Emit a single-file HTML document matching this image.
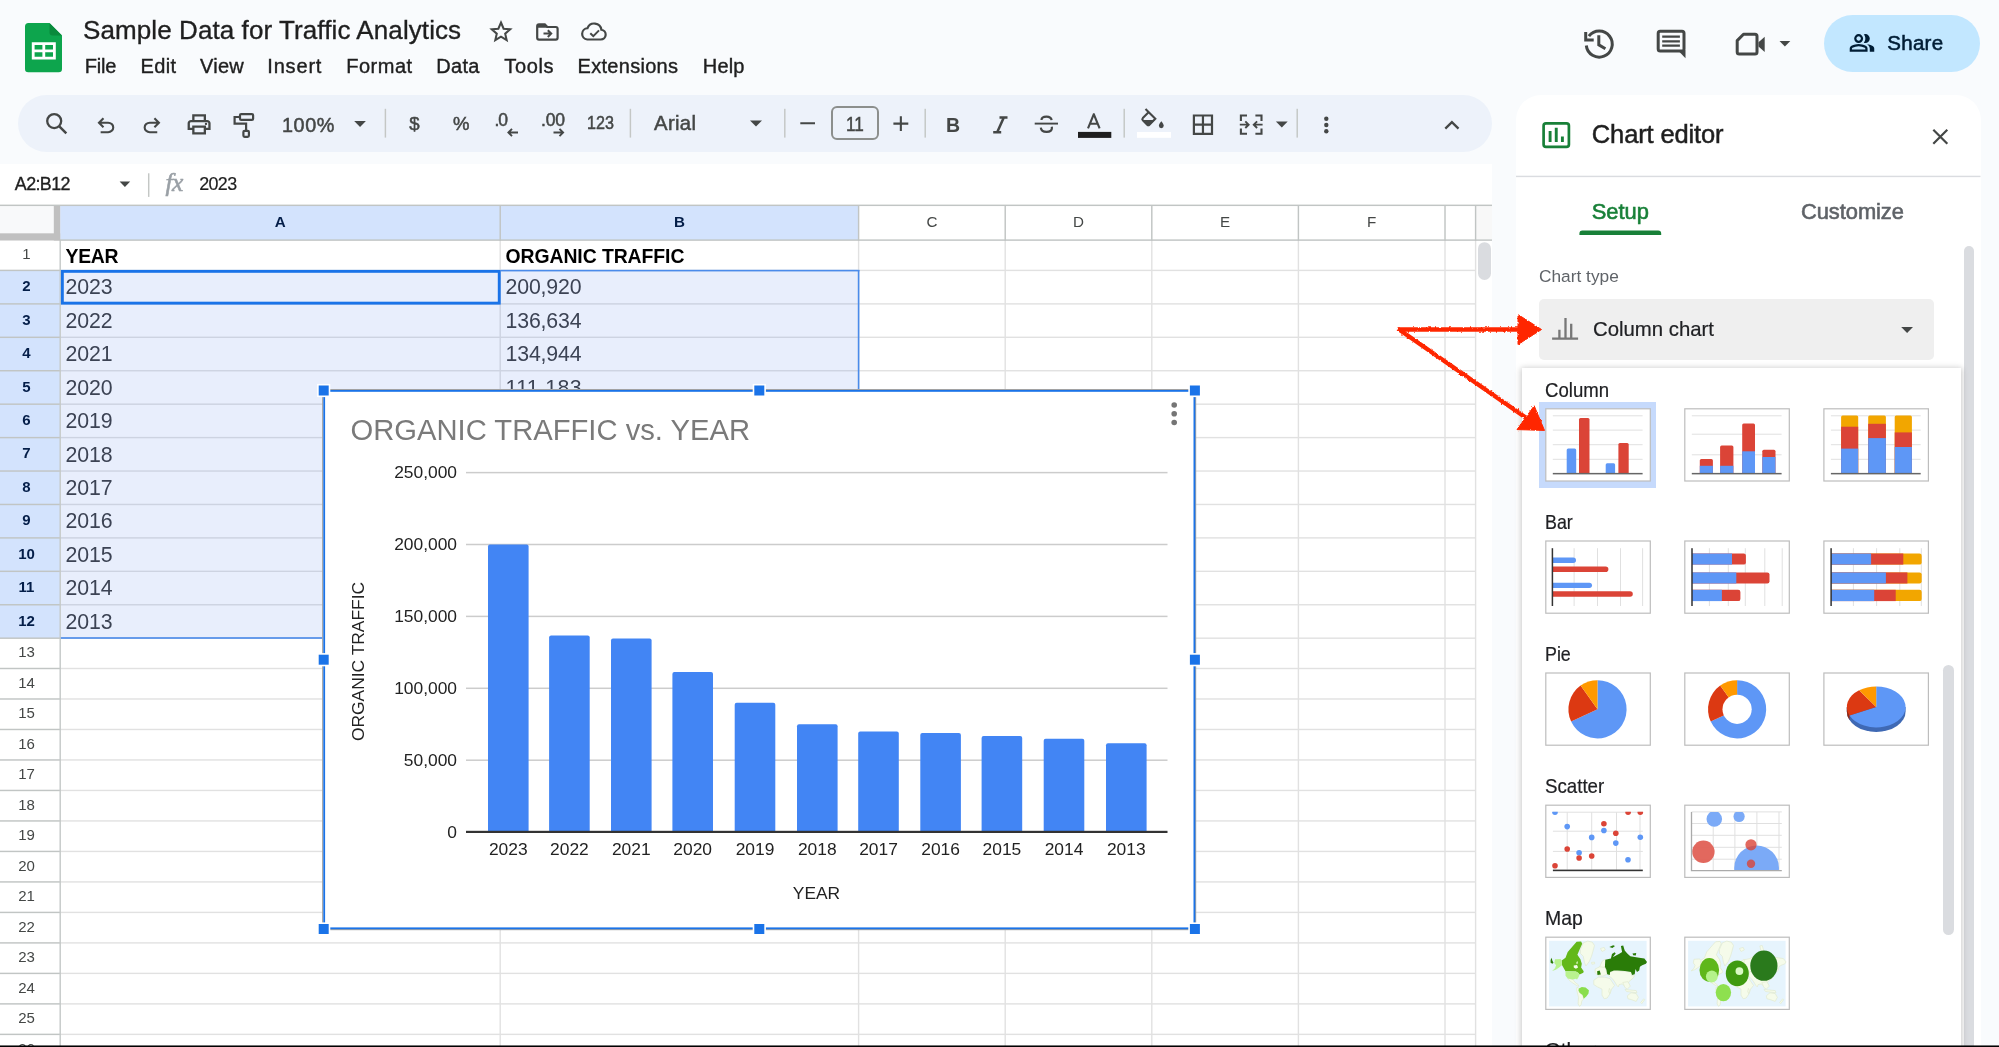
<!DOCTYPE html>
<html><head><meta charset="utf-8"><title>Sample Data for Traffic Analytics</title>
<style>
*{box-sizing:border-box;margin:0;padding:0}
html,body{width:1999px;height:1047px;overflow:hidden;background:#f9fbfd;font-family:"Liberation Sans",sans-serif;color:#1f1f1f}
body{position:relative}
.abs{position:absolute}
.t{position:absolute;white-space:nowrap;line-height:1}
/* top */
#toolbar{left:18px;top:95px;width:1474px;height:57px;border-radius:29px;background:#edf2fa}
#fbar{left:0;top:164px;width:1492px;height:41px;background:#fff}
/* grid */
#grid{position:absolute;left:0;top:0;width:1492px;height:1047px;overflow:hidden}
#grid>*{position:absolute}
.rh{left:-3.5px;width:60px;height:20px;line-height:20px;text-align:center;font-size:15px;color:#444746}
.rh.sel{color:#041e49;font-weight:bold}
.ch{top:211.8px;width:60px;height:20px;line-height:20px;text-align:center;font-size:15.2px;color:#444746}
.ch.sel{color:#041e49;font-weight:bold}
</style></head><body><div id="root" style="position:absolute;left:0;top:0;width:1999px;height:1047px;will-change:transform">
<svg class="abs" style="left:0;top:0" width="1999" height="160" viewBox="0 0 1999 160">
<path d="M28.500 23H49.500L62 35.500V69a3.300 3.300 0 0 1-3.300 3.300H28.300A3.300 3.300 0 0 1 25 69V26.500A3.500 3.500 0 0 1 28.500 23z" fill="#0da54d"/>
<path d="M49.500 23L62 35.500H52.500a3 3 0 0 1-3-3z" fill="#098a3c"/>
<path d="M31.800 42.300h24v17.200h-24zM34.600 45v4.500h7.800V45zM45.200 45v4.500h7.800V45zM34.600 52.300v4.500h7.800v-4.500zM45.200 52.300v4.500h7.800v-4.500z" fill="#fff" fill-rule="evenodd"/>
</svg>
<div class="t" style="left:83px;top:16.99px;font-size:26px;letter-spacing:0.09px;color:#1f1f1f;-webkit-text-stroke:0.35px #1f1f1f;">Sample Data for Traffic Analytics</div>
<div class="t" style="left:84.8px;top:55.77px;font-size:20px;letter-spacing:-0.18px;color:#1f1f1f;-webkit-text-stroke:0.4px #1f1f1f;">File</div>
<div class="t" style="left:140.5px;top:55.77px;font-size:20px;letter-spacing:0.38px;color:#1f1f1f;-webkit-text-stroke:0.4px #1f1f1f;">Edit</div>
<div class="t" style="left:200.1px;top:55.77px;font-size:20px;letter-spacing:0.20px;color:#1f1f1f;-webkit-text-stroke:0.4px #1f1f1f;">View</div>
<div class="t" style="left:267.3px;top:55.77px;font-size:20px;letter-spacing:0.82px;color:#1f1f1f;-webkit-text-stroke:0.4px #1f1f1f;">Insert</div>
<div class="t" style="left:346.2px;top:55.77px;font-size:20px;letter-spacing:0.53px;color:#1f1f1f;-webkit-text-stroke:0.4px #1f1f1f;">Format</div>
<div class="t" style="left:436.2px;top:55.77px;font-size:20px;letter-spacing:0.32px;color:#1f1f1f;-webkit-text-stroke:0.4px #1f1f1f;">Data</div>
<div class="t" style="left:504.3px;top:55.77px;font-size:20px;letter-spacing:0.63px;color:#1f1f1f;-webkit-text-stroke:0.4px #1f1f1f;">Tools</div>
<div class="t" style="left:577.5px;top:55.77px;font-size:20px;letter-spacing:0.30px;color:#1f1f1f;-webkit-text-stroke:0.4px #1f1f1f;">Extensions</div>
<div class="t" style="left:702.8px;top:55.77px;font-size:20px;letter-spacing:0.16px;color:#1f1f1f;-webkit-text-stroke:0.4px #1f1f1f;">Help</div>
<div id="toolbar" class="abs"></div>
<div id="fbar" class="abs"></div>
<div class="t" style="left:282.1px;top:115.84px;font-size:19.8px;letter-spacing:0.52px;color:#444746;-webkit-text-stroke:0.5px #444746;">100%</div>
<div class="t" style="left:409.3px;top:114.76px;font-size:18.6px;letter-spacing:0.00px;color:#444746;-webkit-text-stroke:0.5px #444746;">$</div>
<div class="t" style="left:453px;top:114.74px;font-size:18.5px;letter-spacing:0.00px;color:#444746;-webkit-text-stroke:0.5px #444746;">%</div>
<div class="t" style="left:494.4px;top:111.79px;font-size:17.5px;letter-spacing:-1.00px;color:#444746;-webkit-text-stroke:0.5px #444746;">.0</div>
<div class="t" style="left:541px;top:111.79px;font-size:17.5px;letter-spacing:-0.16px;color:#444746;-webkit-text-stroke:0.5px #444746;">.00</div>
<div class="t" style="left:587.3px;top:114.7px;font-size:17.6px;color:#444746;transform-origin:0 0;transform:scaleX(0.9160);-webkit-text-stroke:0.5px #444746;">123</div>
<div class="t" style="left:654px;top:112.82px;font-size:20.3px;letter-spacing:0.35px;color:#444746;-webkit-text-stroke:0.5px #444746;">Arial</div>
<div class="abs" style="left:830.700px;top:106.200px;width:48.800px;height:34.200px;border:2px solid #8c8f8d;border-radius:6px"></div>
<div class="t" style="left:845.8px;top:114.66px;font-size:19.3px;color:#444746;transform-origin:0 0;transform:scaleX(0.8884);-webkit-text-stroke:0.5px #444746;">11</div>
<div class="t" style="left:946.2px;top:114.22px;font-size:21px;color:#444746;transform-origin:0 0;transform:scaleX(0.9297);font-weight:bold;">B</div>
<div class="t" style="left:14.8px;top:176.35px;font-size:17.9px;letter-spacing:-0.60px;color:#1f1f1f;-webkit-text-stroke:0.35px #1f1f1f;">A2:B12</div>
<div class="t" style="left:199.2px;top:176.35px;font-size:17.9px;letter-spacing:-0.61px;color:#1f1f1f;-webkit-text-stroke:0.2px #1f1f1f;">2023</div>
<div class="t" style="left:165.500px;top:170px;font-family:'Liberation Serif',serif;font-style:italic;font-size:25.500px;color:#9aa0a6;letter-spacing:-0.500px;-webkit-text-stroke:0.600px #9aa0a6">fx</div>
<svg class="abs" style="left:0;top:0" width="1999" height="210" viewBox="0 0 1999 210"><rect x="384.68" y="108.800" width="1.450" height="28.800" fill="#c4c7c5"/><rect x="629.68" y="108.800" width="1.450" height="28.800" fill="#c4c7c5"/><rect x="784.08" y="108.800" width="1.450" height="28.800" fill="#c4c7c5"/><rect x="924.48" y="108.800" width="1.450" height="28.800" fill="#c4c7c5"/><rect x="1123.48" y="108.800" width="1.450" height="28.800" fill="#c4c7c5"/><rect x="1296.48" y="108.800" width="1.450" height="28.800" fill="#c4c7c5"/><rect x="147.980" y="173.300" width="1.450" height="23.600" fill="#c4c7c5"/></svg>
<div class="abs" style="left:1824.200px;top:14.500px;width:156px;height:57.800px;border-radius:29px;background:#c2e7ff"></div>
<div class="t" style="left:1887.3px;top:32.55px;font-size:20.5px;letter-spacing:0.27px;color:#001d35;-webkit-text-stroke:0.55px #001d35;">Share</div>
<svg class="abs" style="left:0;top:0" width="1999" height="210" viewBox="0 0 1999 210" fill="none" stroke="#444746" stroke-width="2.200">
<!-- star -->
<g transform="translate(500.800 31.200) scale(0.905) translate(-500.600 -32.800)"><path d="M500.800 23.200l2.900 6.800 7.300.650-5.550 4.850 1.650 7.200-6.300-3.800-6.300 3.800 1.650-7.200-5.550-4.850 7.300-.650z" stroke-width="2.250" stroke-linejoin="miter"/></g>
<!-- folder move -->
<path d="M537.200 26.200a1.800 1.800 0 0 1 1.800-1.800h5.800l2.600 2.600h8.400a1.800 1.800 0 0 1 1.800 1.800v9a1.800 1.800 0 0 1-1.800 1.800h-16.800a1.800 1.800 0 0 1-1.800-1.800z" stroke-width="2.200"/>
<path d="M537.200 24.400h8l2.400 3.400h-10.400z" fill="#444746" stroke="none"/>
<path d="M543.500 33.600h7M547.800 30.200l3.400 3.400-3.400 3.400" stroke-width="2"/>
<!-- cloud done -->
<path d="M587.200 39.500h13.600a4.900 4.900 0 0 0 .6-9.760 7.200 7.200 0 0 0-13.900-1.500 5.650 5.650 0 0 0-.3 11.260z" stroke-width="2.200"/>
<path d="M590.300 33.200l3 3 5.700-5.800" stroke-width="2"/>
<!-- search -->
<circle cx="54.200" cy="121.100" r="7" stroke-width="2.300"/>
<path d="M59.300 126.300l7 7" stroke-width="2.500"/>
<!-- paint roller -->
<rect x="240" y="114.100" width="13.100" height="5.800" rx="1.200"/>
<path d="M240 117h-5.400v6.700h11.500v6.500"/>
<rect x="243.400" y="130.800" width="5.500" height="6" rx="1.200"/>
<!-- decimal arrows -->
<path d="M518 132.500h-9.500M512 128.900l-3.600 3.600 3.600 3.600" stroke-width="1.900"/>
<path d="M553.500 132.500h9.500M559.500 128.900l3.600 3.600-3.600 3.600" stroke-width="1.900"/>
<!-- minus / plus -->
<path d="M800.300 123.300h14.700M893.400 123.600h14.900M900.850 116.200v14.800" stroke-width="2.100"/>
<!-- italic -->
<path d="M999.500 117.500h8M993.200 132.200h8M1003.800 117.500l-6.600 14.700" stroke-width="2.500"/>
<!-- strikethrough -->
<path d="M1034.700 123.600h23.300" stroke-width="1.900"/>
<path d="M1051.600 120.200c-.3-2.300-2.300-3.600-5.100-3.600-2.900 0-5 1.400-5 3.500M1040.800 127.600c.3 2.700 2.600 4.300 5.800 4.300 3.100 0 5.300-1.500 5.300-3.900 0-.5-.1-.9-.2-1.300" stroke-width="2.200"/>
<!-- text color -->
<rect x="1078" y="131.900" width="33.300" height="6" fill="#1f1f1f" stroke="none"/>
<path d="M1088 128.300l5.750-14h.1l5.750 14M1089.900 123.700h7.800" stroke-width="2.100"/>
<!-- fill color -->
<rect x="1137" y="132" width="34" height="5.800" fill="#fff" stroke="none"/>
<path d="M1145.500 109l9.800 9.800-5.900 5.900a1.600 1.600 0 0 1-2.200 0l-4.400-4.400a1.600 1.600 0 0 1 0-2.200l6-6" stroke-width="2.100"/>
<path d="M1143.200 120h11.500l-6.300 6.300z" fill="#444746" stroke="none"/>
<path d="M1161.300 121.300s-2.400 2.700-2.400 4.500a2.400 2.400 0 0 0 4.800 0c0-1.800-2.400-4.500-2.400-4.500z" fill="#444746" stroke="none"/>
<!-- borders -->
<path d="M1193.900 115.500h18.100v18.300h-18.100zM1202.950 115.500v18.300M1193.900 124.650h18.100" stroke-width="2.200"/>
<!-- merge -->
<path d="M1247 115.500h-6.100v5.400M1255.400 115.500h6.100v5.400M1247 133.800h-6.100v-5.400M1255.400 133.800h6.100v-5.400" stroke-width="2.100"/>
<path d="M1239.800 124.650h8.500M1245.300 121.300l3.350 3.350-3.350 3.350M1262.600 124.650h-8.500M1257.100 121.300l-3.350 3.350 3.350 3.350" stroke-width="1.900"/>
<!-- chevron up -->
<path d="M1445.300 128.600l6.600-6.500 6.600 6.500" stroke-width="2.300"/>
<!-- history -->
<path d="M1586.300 45.500a13 13 0 1 0 2.600-9.300" stroke-width="3"/>
<path d="M1585.700 32v8h8" stroke-width="3"/>
<path d="M1598.800 35.200v9.600l6.600 4" stroke-width="3"/>
<!-- comment -->
<path d="M1658.200 33.300a2 2 0 0 1 2-2h21.800a2 2 0 0 1 2 2v15.800a2 2 0 0 1-2 2h-21.800a2 2 0 0 1-2-2z" stroke-width="3"/>
<path d="M1679.500 52l6 6.200v-8z" fill="#444746" stroke="none"/>
<path d="M1662.200 36.700h17.700M1662.200 41.400h17.700M1662.200 45.700h17.700" stroke-width="2.300"/>
<!-- video -->
<path d="M1737.200 40.600l6.300-6.300h11.500a2 2 0 0 1 2 2v15.600a2 2 0 0 1-2 2h-15.800a2 2 0 0 1-2-2z" stroke-width="3" stroke-linejoin="round"/>
<path d="M1758.500 42.200l6.200-5.500v15.300l-6.200-5.500z" fill="#444746" stroke="none"/>
</svg>
<svg class="abs" style="left:0;top:0" width="1999" height="210" viewBox="0 0 1999 210" fill="#444746">
<!-- carets -->
<path d="M354.200 121.100h11.700l-5.850 5.900z"/>
<path d="M750 120.600h12l-6 6z"/>
<path d="M1275.900 121.600h11.800l-5.900 6z"/>
<path d="M1779.500 41h10.800l-5.400 5.400z"/>
<path d="M119.600 181.400h10.600l-5.300 5.600z"/>
<!-- 3 dots -->
<circle cx="1326.300" cy="118.800" r="2.200"/><circle cx="1326.300" cy="125" r="2.200"/><circle cx="1326.300" cy="131.200" r="2.200"/>
<!-- undo / redo (material symbols) -->
<g transform="translate(93.300 113.300) scale(1.050)"><path d="M7 19v-2h7.100q1.575 0 2.738-1T18 13.500 16.838 11 14.100 10H7.800l2.600 2.600L9 14 4 9l5-5 1.400 1.400L7.800 8H14.100q2.425 0 4.163 1.575T20 13.500t-1.737 3.925T14.100 19z"/></g>
<g transform="translate(139.400 113.300) scale(1.050)"><path d="M9.900 19q-2.425 0-4.163-1.575T4 13.500t1.737-3.925T9.900 8h6.300l-2.600-2.600L15 4l5 5-5 5-1.400-1.400 2.600-2.600H9.900q-1.575 0-2.738 1T6 13.500 7.162 16 9.900 17H17v2z"/></g>
<!-- print -->
<g transform="translate(185.300 111) scale(1.150 1.120)"><path d="M16 8V5H8v3H6V3h12v5zM18 12.500q.425 0 .713-.288T19 11.500t-.287-.712T18 10.500t-.712.288T17 11.500t.288.713.712.287M16 19v-4H8v4zm2 2H6v-4H2v-6q0-1.275.875-2.137T5 8h14q1.275 0 2.138.863T22 11v6h-4zm2-6v-4q0-.425-.288-.712T19 10H5q-.425 0-.712.288T4 11v4h2v-2h12v2z"/></g>
<!-- people -->
<g transform="translate(1848.600 29.700) scale(1.115 1.106)" fill="#001d35"><path d="M1 20v-2.800q0-.85.438-1.562T2.600 14.550q1.550-.775 3.150-1.163T9 13t3.250.387 3.150 1.163q.725.375 1.163 1.088T17 17.200V20zm18 0v-3q0-1.100-.612-2.113T16.650 13.150q1.275.15 2.400.513t2.100.887q.9.500 1.375 1.113T23 17v3zM9 12q-1.650 0-2.825-1.175T5 8t1.175-2.825T9 4t2.825 1.175T13 8t-1.175 2.825T9 12m10-4q0 1.650-1.175 2.825T15 12q-.275 0-.7-.062t-.7-.138q.675-.8 1.038-1.775T15 8t-.362-2.025T13.600 4.200q.350-.125.700-.163T15 4q1.650 0 2.825 1.175T19 8M3 18h12v-.8q0-.275-.137-.5t-.363-.35q-1.350-.675-2.725-1.012T9 15t-2.775.338T3.500 16.350q-.225.125-.363.35T3 17.200zm6-8q.825 0 1.413-.587T11 8t-.587-1.413T9 6t-1.413.588T7 8t.588 1.413T9 10"/></g>
</svg>
<div id="grid">
<svg style="left:0;top:0" width="1492" height="1047" viewBox="0 0 1492 1047">
<rect x="0" y="205" width="1492" height="842" fill="#fff"/>
<rect x="0" y="206" width="54" height="27.500" fill="#f8f9fa"/>
<rect x="60.200" y="206" width="798.4" height="34" fill="#d3e3fd"/>
<rect x="0" y="270" width="60.200" height="368" fill="#d3e3fd"/>
<rect x="60.200" y="269.70" width="1415.4" height="1.400" fill="#e1e1e1"/>
<rect x="60.200" y="303.18" width="1415.4" height="1.400" fill="#e1e1e1"/>
<rect x="60.200" y="336.61" width="1415.4" height="1.400" fill="#e1e1e1"/>
<rect x="60.200" y="370.04" width="1415.4" height="1.400" fill="#e1e1e1"/>
<rect x="60.200" y="403.47" width="1415.4" height="1.400" fill="#e1e1e1"/>
<rect x="60.200" y="436.90" width="1415.4" height="1.400" fill="#e1e1e1"/>
<rect x="60.200" y="470.33" width="1415.4" height="1.400" fill="#e1e1e1"/>
<rect x="60.200" y="503.76" width="1415.4" height="1.400" fill="#e1e1e1"/>
<rect x="60.200" y="537.19" width="1415.4" height="1.400" fill="#e1e1e1"/>
<rect x="60.200" y="570.62" width="1415.4" height="1.400" fill="#e1e1e1"/>
<rect x="60.200" y="604.05" width="1415.4" height="1.400" fill="#e1e1e1"/>
<rect x="60.200" y="637.48" width="1415.4" height="1.400" fill="#e1e1e1"/>
<rect x="60.200" y="667.79" width="1415.4" height="1.400" fill="#e1e1e1"/>
<rect x="60.200" y="698.28" width="1415.4" height="1.400" fill="#e1e1e1"/>
<rect x="60.200" y="728.77" width="1415.4" height="1.400" fill="#e1e1e1"/>
<rect x="60.200" y="759.26" width="1415.4" height="1.400" fill="#e1e1e1"/>
<rect x="60.200" y="789.75" width="1415.4" height="1.400" fill="#e1e1e1"/>
<rect x="60.200" y="820.24" width="1415.4" height="1.400" fill="#e1e1e1"/>
<rect x="60.200" y="850.73" width="1415.4" height="1.400" fill="#e1e1e1"/>
<rect x="60.200" y="881.22" width="1415.4" height="1.400" fill="#e1e1e1"/>
<rect x="60.200" y="911.71" width="1415.4" height="1.400" fill="#e1e1e1"/>
<rect x="60.200" y="942.20" width="1415.4" height="1.400" fill="#e1e1e1"/>
<rect x="60.200" y="972.69" width="1415.4" height="1.400" fill="#e1e1e1"/>
<rect x="60.200" y="1003.18" width="1415.4" height="1.400" fill="#e1e1e1"/>
<rect x="60.200" y="1033.67" width="1415.4" height="1.400" fill="#e1e1e1"/>
<rect x="60.200" y="1064.16" width="1415.4" height="1.400" fill="#e1e1e1"/>
<rect x="499.50" y="240" width="1.400" height="810" fill="#e1e1e1"/>
<rect x="857.90" y="240" width="1.400" height="810" fill="#e1e1e1"/>
<rect x="1004.50" y="240" width="1.400" height="810" fill="#e1e1e1"/>
<rect x="1151.10" y="240" width="1.400" height="810" fill="#e1e1e1"/>
<rect x="1297.70" y="240" width="1.400" height="810" fill="#e1e1e1"/>
<rect x="1444.30" y="240" width="1.400" height="810" fill="#e1e1e1"/>
<rect x="1474.90" y="240" width="1.400" height="810" fill="#e1e1e1"/>
<rect x="60.900" y="270.400" width="797.7" height="367.800" fill="rgb(25,85,225)" fill-opacity="0.1"/>
<rect x="1476.200" y="206" width="15.800" height="33.500" fill="#f8f8f8"/>
<rect x="1478" y="242.200" width="13" height="37.800" rx="6.500" fill="#dadce0"/>
<rect x="0" y="204.600" width="1492.400" height="1.450" fill="#c1c5c4"/>
<rect x="60" y="239.38" width="1432.400" height="1.450" fill="#c1c5c4"/>
<rect x="499.48" y="205" width="1.450" height="35.700" fill="#c1c5c4"/>
<rect x="857.88" y="205" width="1.450" height="35.700" fill="#c1c5c4"/>
<rect x="1004.48" y="205" width="1.450" height="35.700" fill="#c1c5c4"/>
<rect x="1151.08" y="205" width="1.450" height="35.700" fill="#c1c5c4"/>
<rect x="1297.68" y="205" width="1.450" height="35.700" fill="#c1c5c4"/>
<rect x="1444.28" y="205" width="1.450" height="35.700" fill="#c1c5c4"/>
<rect x="1474.88" y="205" width="1.450" height="35.700" fill="#c1c5c4"/>
<rect x="0" y="269.68" width="60.800" height="1.450" fill="#c1c5c4"/>
<rect x="0" y="303.16" width="60.800" height="1.450" fill="#c1c5c4"/>
<rect x="0" y="336.59" width="60.800" height="1.450" fill="#c1c5c4"/>
<rect x="0" y="370.02" width="60.800" height="1.450" fill="#c1c5c4"/>
<rect x="0" y="403.45" width="60.800" height="1.450" fill="#c1c5c4"/>
<rect x="0" y="436.88" width="60.800" height="1.450" fill="#c1c5c4"/>
<rect x="0" y="470.31" width="60.800" height="1.450" fill="#c1c5c4"/>
<rect x="0" y="503.74" width="60.800" height="1.450" fill="#c1c5c4"/>
<rect x="0" y="537.17" width="60.800" height="1.450" fill="#c1c5c4"/>
<rect x="0" y="570.60" width="60.800" height="1.450" fill="#c1c5c4"/>
<rect x="0" y="604.03" width="60.800" height="1.450" fill="#c1c5c4"/>
<rect x="0" y="637.46" width="60.800" height="1.450" fill="#c1c5c4"/>
<rect x="0" y="667.77" width="60.800" height="1.450" fill="#c1c5c4"/>
<rect x="0" y="698.26" width="60.800" height="1.450" fill="#c1c5c4"/>
<rect x="0" y="728.75" width="60.800" height="1.450" fill="#c1c5c4"/>
<rect x="0" y="759.24" width="60.800" height="1.450" fill="#c1c5c4"/>
<rect x="0" y="789.73" width="60.800" height="1.450" fill="#c1c5c4"/>
<rect x="0" y="820.22" width="60.800" height="1.450" fill="#c1c5c4"/>
<rect x="0" y="850.71" width="60.800" height="1.450" fill="#c1c5c4"/>
<rect x="0" y="881.20" width="60.800" height="1.450" fill="#c1c5c4"/>
<rect x="0" y="911.69" width="60.800" height="1.450" fill="#c1c5c4"/>
<rect x="0" y="942.18" width="60.800" height="1.450" fill="#c1c5c4"/>
<rect x="0" y="972.67" width="60.800" height="1.450" fill="#c1c5c4"/>
<rect x="0" y="1003.16" width="60.800" height="1.450" fill="#c1c5c4"/>
<rect x="0" y="1033.65" width="60.800" height="1.450" fill="#c1c5c4"/>
<rect x="0" y="1064.14" width="60.800" height="1.450" fill="#c1c5c4"/>
<rect x="59.48" y="240" width="1.450" height="810" fill="#c6cac9"/>
<rect x="53.800" y="206" width="6.400" height="34.500" fill="#c0c0c0"/>
<rect x="0" y="233.300" width="60.200" height="7.200" fill="#c0c0c0"/>
<rect x="857.80" y="270" width="1.600" height="368.800" fill="#4a8bea"/>
<rect x="60.800" y="637.20" width="798.6" height="1.600" fill="#4a8bea"/>
<rect x="500.800" y="269.800" width="358.6" height="1.600" fill="#4a8bea"/>
<rect x="62.350" y="271.350" width="436.900" height="31.800" fill="none" stroke="#1a73e8" stroke-width="2.900"/>
</svg>
<div class="rh" style="top:244.35px">1</div>
<div class="rh sel" style="top:276.24px">2</div>
<div class="rh sel" style="top:309.70px">3</div>
<div class="rh sel" style="top:343.12px">4</div>
<div class="rh sel" style="top:376.56px">5</div>
<div class="rh sel" style="top:409.99px">6</div>
<div class="rh sel" style="top:443.42px">7</div>
<div class="rh sel" style="top:476.85px">8</div>
<div class="rh sel" style="top:510.27px">9</div>
<div class="rh sel" style="top:543.71px">10</div>
<div class="rh sel" style="top:577.13px">11</div>
<div class="rh sel" style="top:610.57px">12</div>
<div class="rh" style="top:642.44px">13</div>
<div class="rh" style="top:672.84px">14</div>
<div class="rh" style="top:703.33px">15</div>
<div class="rh" style="top:733.82px">16</div>
<div class="rh" style="top:764.31px">17</div>
<div class="rh" style="top:794.80px">18</div>
<div class="rh" style="top:825.28px">19</div>
<div class="rh" style="top:855.77px">20</div>
<div class="rh" style="top:886.26px">21</div>
<div class="rh" style="top:916.75px">22</div>
<div class="rh" style="top:947.25px">23</div>
<div class="rh" style="top:977.74px">24</div>
<div class="rh" style="top:1008.23px">25</div>
<div class="rh" style="top:1038.71px">26</div>
<div class="ch sel" style="left:250.20px">A</div>
<div class="ch sel" style="left:649.40px">B</div>
<div class="ch" style="left:901.90px">C</div>
<div class="ch" style="left:1048.50px">D</div>
<div class="ch" style="left:1195.10px">E</div>
<div class="ch" style="left:1341.70px">F</div>
<div class="t" style="left:65.6px;top:277.37px;font-size:21.3px;letter-spacing:-0.13px;color:#3c4354;">2023</div>
<div class="t" style="left:505.6px;top:277.37px;font-size:21.3px;letter-spacing:-0.18px;color:#3c4354;">200,920</div>
<div class="t" style="left:65.6px;top:310.81px;font-size:21.3px;letter-spacing:-0.13px;color:#3c4354;">2022</div>
<div class="t" style="left:505.6px;top:310.81px;font-size:21.3px;letter-spacing:-0.18px;color:#3c4354;">136,634</div>
<div class="t" style="left:65.6px;top:344.25px;font-size:21.3px;letter-spacing:-0.13px;color:#3c4354;">2021</div>
<div class="t" style="left:505.6px;top:344.25px;font-size:21.3px;letter-spacing:-0.18px;color:#3c4354;">134,944</div>
<div class="t" style="left:65.6px;top:377.69px;font-size:21.3px;letter-spacing:-0.13px;color:#3c4354;">2020</div>
<div class="t" style="left:505.6px;top:377.69px;font-size:21.3px;letter-spacing:0.35px;color:#3c4354;">111,183</div>
<div class="t" style="left:65.6px;top:411.13px;font-size:21.3px;letter-spacing:-0.13px;color:#3c4354;">2019</div>
<div class="t" style="left:65.6px;top:444.57px;font-size:21.3px;letter-spacing:-0.13px;color:#3c4354;">2018</div>
<div class="t" style="left:65.6px;top:478.01px;font-size:21.3px;letter-spacing:-0.13px;color:#3c4354;">2017</div>
<div class="t" style="left:65.6px;top:511.45px;font-size:21.3px;letter-spacing:-0.13px;color:#3c4354;">2016</div>
<div class="t" style="left:65.6px;top:544.89px;font-size:21.3px;letter-spacing:-0.13px;color:#3c4354;">2015</div>
<div class="t" style="left:65.6px;top:578.33px;font-size:21.3px;letter-spacing:-0.13px;color:#3c4354;">2014</div>
<div class="t" style="left:65.6px;top:611.77px;font-size:21.3px;letter-spacing:-0.13px;color:#3c4354;">2013</div>
<div class="t" style="left:65.5px;top:246.78px;font-size:19.4px;letter-spacing:-0.30px;color:#000;font-weight:bold;">YEAR</div>
<div class="t" style="left:505.5px;top:246.78px;font-size:19.4px;letter-spacing:-0.07px;color:#000;font-weight:bold;">ORGANIC TRAFFIC</div>
</div>
<svg class="abs" style="left:0;top:0" width="1999" height="1047" viewBox="0 0 1999 1047" font-family="Liberation Sans, sans-serif">
<rect x="322.700" y="389.600" width="872.900" height="540" fill="#fff" stroke="#a3a3a3" stroke-width="1.200"/><rect x="324.200" y="390.900" width="870.200" height="537.400" fill="#fff" stroke="#1a73e8" stroke-width="1.800"/>
<text x="350.500" y="440" font-size="29.200" fill="#7a7a7a">ORGANIC TRAFFIC vs. YEAR</text>
<rect x="466" y="471.85" width="1702" height="1.500" fill="#ccc" transform="scale(1)" style="width:701.500px"/>
<text x="457" y="478.2" font-size="17.400" fill="#222" text-anchor="end">250,000</text>
<rect x="466" y="543.75" width="1702" height="1.500" fill="#ccc" transform="scale(1)" style="width:701.500px"/>
<text x="457" y="550.1" font-size="17.400" fill="#222" text-anchor="end">200,000</text>
<rect x="466" y="615.65" width="1702" height="1.500" fill="#ccc" transform="scale(1)" style="width:701.500px"/>
<text x="457" y="622.0" font-size="17.400" fill="#222" text-anchor="end">150,000</text>
<rect x="466" y="687.55" width="1702" height="1.500" fill="#ccc" transform="scale(1)" style="width:701.500px"/>
<text x="457" y="693.9" font-size="17.400" fill="#222" text-anchor="end">100,000</text>
<rect x="466" y="759.45" width="1702" height="1.500" fill="#ccc" transform="scale(1)" style="width:701.500px"/>
<text x="457" y="765.8" font-size="17.400" fill="#222" text-anchor="end">50,000</text>
<text x="457" y="837.6" font-size="17.400" fill="#222" text-anchor="end">0</text>
<path d="M488.0 832V546.4q0-2 2-2h36.600q2 0 2 2V832z" fill="#4285f4"/>
<text x="508.3" y="855" font-size="17.400" fill="#222" text-anchor="middle">2023</text>
<path d="M549.1 832V637.6q0-2 2-2h36.600q2 0 2 2V832z" fill="#4285f4"/>
<text x="569.4" y="855" font-size="17.400" fill="#222" text-anchor="middle">2022</text>
<path d="M611.0 832V640.5q0-2 2-2h36.600q2 0 2 2V832z" fill="#4285f4"/>
<text x="631.3" y="855" font-size="17.400" fill="#222" text-anchor="middle">2021</text>
<path d="M672.4 832V674.0q0-2 2-2h36.600q2 0 2 2V832z" fill="#4285f4"/>
<text x="692.7" y="855" font-size="17.400" fill="#222" text-anchor="middle">2020</text>
<path d="M734.7 832V704.8q0-2 2-2h36.600q2 0 2 2V832z" fill="#4285f4"/>
<text x="755.0" y="855" font-size="17.400" fill="#222" text-anchor="middle">2019</text>
<path d="M797.0 832V726.2q0-2 2-2h36.600q2 0 2 2V832z" fill="#4285f4"/>
<text x="817.3" y="855" font-size="17.400" fill="#222" text-anchor="middle">2018</text>
<path d="M858.2 832V733.6q0-2 2-2h36.600q2 0 2 2V832z" fill="#4285f4"/>
<text x="878.5" y="855" font-size="17.400" fill="#222" text-anchor="middle">2017</text>
<path d="M920.3 832V734.9q0-2 2-2h36.600q2 0 2 2V832z" fill="#4285f4"/>
<text x="940.6" y="855" font-size="17.400" fill="#222" text-anchor="middle">2016</text>
<path d="M981.6 832V738.1q0-2 2-2h36.600q2 0 2 2V832z" fill="#4285f4"/>
<text x="1001.9" y="855" font-size="17.400" fill="#222" text-anchor="middle">2015</text>
<path d="M1043.7 832V740.8q0-2 2-2h36.600q2 0 2 2V832z" fill="#4285f4"/>
<text x="1064.0" y="855" font-size="17.400" fill="#222" text-anchor="middle">2014</text>
<path d="M1106.0 832V745.3q0-2 2-2h36.600q2 0 2 2V832z" fill="#4285f4"/>
<text x="1126.3" y="855" font-size="17.400" fill="#222" text-anchor="middle">2013</text>
<rect x="466" y="830.800" width="701.500" height="2.200" fill="#333"/>
<text x="816.500" y="898.500" font-size="17.400" fill="#222" text-anchor="middle">YEAR</text>
<text transform="translate(363.500 661.500) rotate(-90)" font-size="17.400" fill="#222" text-anchor="middle">ORGANIC TRAFFIC</text>
<circle cx="1174.200" cy="405" r="2.800" fill="#757575"/>
<circle cx="1174.200" cy="413.8" r="2.800" fill="#757575"/>
<circle cx="1174.200" cy="422.5" r="2.800" fill="#757575"/>
<rect x="317.1" y="383.9" width="13.200" height="13.200" fill="#fff"/><rect x="318.7" y="385.5" width="10" height="10" fill="#1a73e8"/>
<rect x="752.7" y="383.9" width="13.200" height="13.200" fill="#fff"/><rect x="754.3" y="385.5" width="10" height="10" fill="#1a73e8"/>
<rect x="1188.3" y="383.9" width="13.200" height="13.200" fill="#fff"/><rect x="1189.9" y="385.5" width="10" height="10" fill="#1a73e8"/>
<rect x="317.1" y="653.1" width="13.200" height="13.200" fill="#fff"/><rect x="318.7" y="654.7" width="10" height="10" fill="#1a73e8"/>
<rect x="1188.3" y="653.1" width="13.200" height="13.200" fill="#fff"/><rect x="1189.9" y="654.7" width="10" height="10" fill="#1a73e8"/>
<rect x="317.1" y="922.4" width="13.200" height="13.200" fill="#fff"/><rect x="318.7" y="924.0" width="10" height="10" fill="#1a73e8"/>
<rect x="752.7" y="922.4" width="13.200" height="13.200" fill="#fff"/><rect x="754.3" y="924.0" width="10" height="10" fill="#1a73e8"/>
<rect x="1188.3" y="922.4" width="13.200" height="13.200" fill="#fff"/><rect x="1189.9" y="924.0" width="10" height="10" fill="#1a73e8"/>
</svg>
<div id="panel" class="abs" style="left:1516px;top:94.500px;width:464.500px;height:960px;background:#fff;border-radius:25px 25px 0 0"></div>
<svg class="abs" style="left:0;top:0" width="1999" height="300" viewBox="0 0 1999 300"><rect x="1516" y="175.700" width="464.500" height="1.450" fill="#dadce0"/><path d="M1579.400 234.900v-1.500a3 3 0 0 1 3-3h75.800a3 3 0 0 1 3 3v1.500z" fill="#188038"/></svg>
<div class="t" style="left:1591.8px;top:122.41px;font-size:25.5px;letter-spacing:-0.13px;color:#1f1f1f;-webkit-text-stroke:0.5px #1f1f1f;">Chart editor</div>
<div class="t" style="left:1591.8px;top:200.76px;font-size:21.9px;letter-spacing:-0.03px;color:#188038;-webkit-text-stroke:0.6px #188038;">Setup</div>
<div class="t" style="left:1801px;top:200.76px;font-size:21.9px;letter-spacing:-0.06px;color:#5f6368;-webkit-text-stroke:0.6px #5f6368;">Customize</div>
<div class="abs" style="left:1963.500px;top:245.500px;width:10.500px;height:820px;background:#dadce0;border-radius:5.250px"></div>
<div class="t" style="left:1538.7px;top:268.27px;font-size:17.4px;color:#5f6368;transform-origin:0 0;transform:scaleX(0.9942);">Chart type</div>
<div class="abs" style="left:1539px;top:299px;width:394.700px;height:60.700px;background:#efefef;border-radius:5px"></div>
<div class="t" style="left:1592.9px;top:319.32px;font-size:20.3px;color:#202124;transform-origin:0 0;transform:scaleX(1.0031);-webkit-text-stroke:0.2px #202124;">Column chart</div>
<div class="abs" style="left:1521.500px;top:367.500px;width:439px;height:700px;background:#fff;box-shadow:0 1px 6px 1px rgba(0,0,0,0.22)"></div>
<div class="abs" style="left:1942.500px;top:665px;width:11px;height:270px;background:#dadce0;border-radius:5.500px"></div>
<div class="t" style="left:1545.2px;top:380.02px;font-size:20.3px;color:#202124;transform-origin:0 0;transform:scaleX(0.9164);-webkit-text-stroke:0.2px #202124;">Column</div>
<div class="t" style="left:1545.2px;top:512.22px;font-size:20.3px;color:#202124;transform-origin:0 0;transform:scaleX(0.8800);-webkit-text-stroke:0.2px #202124;">Bar</div>
<div class="t" style="left:1545.2px;top:644.22px;font-size:20.3px;color:#202124;transform-origin:0 0;transform:scaleX(0.8793);-webkit-text-stroke:0.2px #202124;">Pie</div>
<div class="t" style="left:1545.2px;top:776.42px;font-size:20.3px;color:#202124;transform-origin:0 0;transform:scaleX(0.9221);-webkit-text-stroke:0.2px #202124;">Scatter</div>
<div class="t" style="left:1545.2px;top:907.72px;font-size:20.3px;color:#202124;transform-origin:0 0;transform:scaleX(0.9572);-webkit-text-stroke:0.2px #202124;">Map</div>
<div class="t" style="left:1545.2px;top:1039.82px;font-size:20.3px;color:#202124;transform-origin:0 0;transform:scaleX(1.0006);-webkit-text-stroke:0.2px #202124;">Other</div>
<div class="abs" style="left:1538.800px;top:402.200px;width:117.300px;height:85.500px;background:#c6dafc"></div>
<svg class="abs" style="left:0;top:0" width="1999" height="1047" viewBox="0 0 1999 1047">
<g transform="translate(1545.2 408.2)"><rect x="0.600" y="0.600" width="104.500" height="72.200" fill="#fff" stroke="#bdbdbd" stroke-width="1.200"/><rect x="7.6" y="7.1" width="89.80000000000001" height="1" fill="#e0e0e0"/><rect x="7.6" y="21.4" width="89.80000000000001" height="1" fill="#e0e0e0"/><rect x="7.6" y="36.0" width="89.80000000000001" height="1" fill="#e0e0e0"/><rect x="7.6" y="50.6" width="89.80000000000001" height="1" fill="#e0e0e0"/><path d="M21.5 65.4V41.9q0-1.5 1.5-1.5H29.5q1.5 0 1.5 1.5V65.4z" fill="#5e97f6"/><path d="M33.8 65.4V11.3q0-1.5 1.5-1.5H42.8q1.5 0 1.5 1.5V65.4z" fill="#db4437"/><path d="M60.5 65.4V56.5q0-1.5 1.5-1.5H68.4q1.5 0 1.5 1.5V65.4z" fill="#5e97f6"/><path d="M73.2 65.4V36.2q0-1.5 1.5-1.5H82.0q1.5 0 1.5 1.5V65.4z" fill="#db4437"/><rect x="7.600" y="64.700" width="89.800" height="1.500" fill="#666"/></g>
<g transform="translate(1684.2 408.2)"><rect x="0.600" y="0.600" width="104.500" height="72.200" fill="#fff" stroke="#bdbdbd" stroke-width="1.200"/><rect x="7.6" y="7.1" width="89.80000000000001" height="1" fill="#e0e0e0"/><rect x="7.6" y="25.5" width="89.80000000000001" height="1" fill="#e0e0e0"/><rect x="7.6" y="46.1" width="89.80000000000001" height="1" fill="#e0e0e0"/><path d="M15.6 65.4V52.2q0-1.5 1.5-1.5H27.2q1.5 0 1.5 1.5V65.4z" fill="#db4437"/><rect x="15.6" y="57.6" width="13.1" height="7.8" fill="#5e97f6"/><path d="M35.9 65.4V38.8q0-1.5 1.5-1.5H47.7q1.5 0 1.5 1.5V65.4z" fill="#db4437"/><rect x="35.9" y="57.6" width="13.3" height="7.8" fill="#5e97f6"/><path d="M58 65.4V16.9q0-1.5 1.5-1.5H69.3q1.5 0 1.5 1.5V65.4z" fill="#db4437"/><rect x="58" y="43.1" width="12.8" height="22.3" fill="#5e97f6"/><path d="M78.1 65.4V43.1q0-1.5 1.5-1.5H89.8q1.5 0 1.5 1.5V65.4z" fill="#db4437"/><rect x="78.1" y="48.8" width="13.2" height="16.6" fill="#5e97f6"/><rect x="7.600" y="64.700" width="89.800" height="1.500" fill="#666"/></g>
<g transform="translate(1823.3 408.2)"><rect x="0.600" y="0.600" width="104.500" height="72.200" fill="#fff" stroke="#bdbdbd" stroke-width="1.200"/><rect x="7.6" y="7.1" width="89.80000000000001" height="1" fill="#e0e0e0"/><rect x="7.6" y="21.4" width="89.80000000000001" height="1" fill="#e0e0e0"/><rect x="7.6" y="36.0" width="89.80000000000001" height="1" fill="#e0e0e0"/><rect x="7.6" y="50.6" width="89.80000000000001" height="1" fill="#e0e0e0"/><path d="M17.8 65.4V8.7q0-1.5 1.5-1.5H33.4q1.5 0 1.5 1.5V65.4z" fill="#f2a600"/><rect x="17.8" y="18.5" width="17.1" height="46.9" fill="#db4437"/><rect x="17.8" y="40.4" width="17.1" height="25.0" fill="#5e97f6"/><path d="M44.9 65.4V8.7q0-1.5 1.5-1.5H61.1q1.5 0 1.5 1.5V65.4z" fill="#f2a600"/><rect x="44.9" y="15.6" width="17.7" height="49.8" fill="#db4437"/><rect x="44.9" y="29.9" width="17.7" height="35.5" fill="#5e97f6"/><path d="M71.4 65.4V8.7q0-1.5 1.5-1.5H87.1q1.5 0 1.5 1.5V65.4z" fill="#f2a600"/><rect x="71.4" y="24.2" width="17.2" height="41.2" fill="#db4437"/><rect x="71.4" y="38.8" width="17.2" height="26.6" fill="#5e97f6"/><rect x="7.600" y="64.700" width="89.800" height="1.500" fill="#666"/></g>
<g transform="translate(1545.2 540.4)"><rect x="0.600" y="0.600" width="104.500" height="72.200" fill="#fff" stroke="#bdbdbd" stroke-width="1.200"/><rect x="28.4" y="7.8" width="1" height="57.8" fill="#e0e0e0"/><rect x="51.8" y="7.8" width="1" height="57.8" fill="#e0e0e0"/><rect x="74.8" y="7.8" width="1" height="57.8" fill="#e0e0e0"/><rect x="96.9" y="7.8" width="1" height="57.8" fill="#e0e0e0"/><path d="M7.2 17.2H28.1a2.700000000000001 2.700000000000001 0 0 1 2.700000000000001 2.700000000000001V19.9a2.700000000000001 2.700000000000001 0 0 1 -2.700000000000001 2.700000000000001H7.2z" fill="#5e97f6"/><path d="M7.2 26H60.400000000000006a2.8000000000000007 2.8000000000000007 0 0 1 2.8000000000000007 2.8000000000000007V28.8a2.8000000000000007 2.8000000000000007 0 0 1 -2.8000000000000007 2.8000000000000007H7.2z" fill="#db4437"/><path d="M7.2 42.3H44.14999999999999a2.650000000000002 2.650000000000002 0 0 1 2.650000000000002 2.650000000000002V44.95a2.650000000000002 2.650000000000002 0 0 1 -2.650000000000002 2.650000000000002H7.2z" fill="#5e97f6"/><path d="M7.2 50.9H84.85a2.75 2.75 0 0 1 2.75 2.75V53.65a2.75 2.75 0 0 1 -2.75 2.75H7.2z" fill="#db4437"/><rect x="6.45" y="7.800" width="1.500" height="57.800" fill="#333"/></g>
<g transform="translate(1684.2 540.4)"><rect x="0.600" y="0.600" width="104.500" height="72.200" fill="#fff" stroke="#bdbdbd" stroke-width="1.200"/><rect x="24.7" y="7.8" width="1" height="57.8" fill="#e0e0e0"/><rect x="43.6" y="7.8" width="1" height="57.8" fill="#e0e0e0"/><rect x="60.6" y="7.8" width="1" height="57.8" fill="#e0e0e0"/><rect x="80.1" y="7.8" width="1" height="57.8" fill="#e0e0e0"/><rect x="97.5" y="7.8" width="1" height="57.8" fill="#e0e0e0"/><path d="M7.8 13.1H59.5a2.2 2.2 0 0 1 2.2 2.2V22.0a2.2 2.2 0 0 1 -2.2 2.2H7.8z" fill="#db4437"/><rect x="7.800" y="13.1" width="40.0" height="11.1" fill="#5e97f6"/><path d="M7.8 32H83.1a2.2 2.2 0 0 1 2.2 2.2V40.9a2.2 2.2 0 0 1 -2.2 2.2H7.8z" fill="#db4437"/><rect x="7.800" y="32" width="44.3" height="11.1" fill="#5e97f6"/><path d="M7.8 49.4H54.0a2.2 2.2 0 0 1 2.2 2.2V58.5a2.2 2.2 0 0 1 -2.2 2.2H7.8z" fill="#db4437"/><rect x="7.800" y="49.4" width="29.9" height="11.3" fill="#5e97f6"/><rect x="7.05" y="7.800" width="1.500" height="57.800" fill="#333"/></g>
<g transform="translate(1823.3 540.4)"><rect x="0.600" y="0.600" width="104.500" height="72.200" fill="#fff" stroke="#bdbdbd" stroke-width="1.200"/><rect x="29.6" y="7.8" width="1" height="57.8" fill="#e0e0e0"/><rect x="52.8" y="7.8" width="1" height="57.8" fill="#e0e0e0"/><rect x="76.0" y="7.8" width="1" height="57.8" fill="#e0e0e0"/><rect x="97.5" y="7.8" width="1" height="57.8" fill="#e0e0e0"/><path d="M7.8 13.1H96.2a2.2 2.2 0 0 1 2.2 2.2V22.0a2.2 2.2 0 0 1 -2.2 2.2H7.8z" fill="#f2a600"/><rect x="7.800" y="13.1" width="72.2" height="11.1" fill="#db4437"/><rect x="7.800" y="13.1" width="40.0" height="11.1" fill="#5e97f6"/><path d="M7.8 32H96.2a2.2 2.2 0 0 1 2.2 2.2V40.9a2.2 2.2 0 0 1 -2.2 2.2H7.8z" fill="#f2a600"/><rect x="7.800" y="32" width="76.3" height="11.1" fill="#db4437"/><rect x="7.800" y="32" width="54.8" height="11.1" fill="#5e97f6"/><path d="M7.8 49.4H96.2a2.2 2.2 0 0 1 2.2 2.2V58.5a2.2 2.2 0 0 1 -2.2 2.2H7.8z" fill="#f2a600"/><rect x="7.800" y="49.4" width="64.6" height="11.3" fill="#db4437"/><rect x="7.800" y="49.4" width="43.1" height="11.3" fill="#5e97f6"/><rect x="7.05" y="7.800" width="1.500" height="57.800" fill="#333"/></g>
<g transform="translate(1545.2 672.4)"><rect x="0.600" y="0.600" width="104.500" height="72.200" fill="#fff" stroke="#bdbdbd" stroke-width="1.200"/><path d="M52.3 36.9L52.30 7.80A29.1 29.1 0 1 1 25.93 49.20z" fill="#5e97f6"/><path d="M52.3 36.9L25.93 49.20A29.1 29.1 0 0 1 35.40 13.21z" fill="#dc3912"/><path d="M52.3 36.9L35.40 13.21A29.1 29.1 0 0 1 52.30 7.80z" fill="#ff9900"/></g>
<g transform="translate(1684.2 672.4)"><rect x="0.600" y="0.600" width="104.500" height="72.200" fill="#fff" stroke="#bdbdbd" stroke-width="1.200"/><path d="M52.9 36.9L52.90 7.80A29.1 29.1 0 1 1 26.53 49.20z" fill="#5e97f6"/><path d="M52.9 36.9L26.53 49.20A29.1 29.1 0 0 1 36.00 13.21z" fill="#dc3912"/><path d="M52.9 36.9L36.00 13.21A29.1 29.1 0 0 1 52.90 7.80z" fill="#ff9900"/><circle cx="52.900" cy="36.900" r="14.600" fill="#fff"/></g>
<g transform="translate(1823.3 672.4)"><rect x="0.600" y="0.600" width="104.500" height="72.200" fill="#fff" stroke="#bdbdbd" stroke-width="1.200"/><path d="M23.5 34.5v4.500A29.4 20.5 0 0 0 82.3 39.0v-4.500z" fill="#3f69b4"/><path d="M23.5 34.5v4A29.4 20.5 0 0 0 26.25 47.66V43.16z" fill="#9a280d"/><path d="M52.9 34.5L52.90 14.00A29.4 20.5 0 1 1 26.25 43.16z" fill="#5e97f6"/><path d="M52.9 34.5L26.25 43.16A29.4 20.5 0 0 1 35.83 17.81z" fill="#dc3912"/><path d="M52.9 34.5L35.83 17.81A29.4 20.5 0 0 1 52.90 14.00z" fill="#ff9900"/></g>
<g transform="translate(1545.2 804.6)"><rect x="0.600" y="0.600" width="104.500" height="72.200" fill="#fff" stroke="#bdbdbd" stroke-width="1.200"/><defs><clipPath id="sc1"><rect x="5" y="7.100" width="96" height="62"/></clipPath></defs><rect x="21.5" y="7.6" width="1" height="57.4" fill="#e0e0e0"/><rect x="46.0" y="7.6" width="1" height="57.4" fill="#e0e0e0"/><rect x="70.8" y="7.6" width="1" height="57.4" fill="#e0e0e0"/><rect x="94.3" y="7.6" width="1" height="57.4" fill="#e0e0e0"/><rect x="7.7" y="7.1" width="89.89999999999999" height="1" fill="#e0e0e0"/><rect x="7.7" y="26.1" width="89.89999999999999" height="1" fill="#e0e0e0"/><rect x="7.7" y="46.3" width="89.89999999999999" height="1" fill="#e0e0e0"/><g clip-path="url(#sc1)"><circle cx="9.8" cy="7.6" r="2.800" fill="#5e97f6"/><circle cx="22" cy="22" r="2.800" fill="#5e97f6"/><circle cx="46.5" cy="32.8" r="2.800" fill="#5e97f6"/><circle cx="58.7" cy="25.9" r="2.800" fill="#5e97f6"/><circle cx="70.6" cy="38.5" r="2.800" fill="#5e97f6"/><circle cx="95.1" cy="32.6" r="2.800" fill="#5e97f6"/><circle cx="33.9" cy="48.2" r="2.800" fill="#5e97f6"/><circle cx="82.8" cy="55.2" r="2.800" fill="#5e97f6"/><circle cx="82.9" cy="7.6" r="2.800" fill="#db4437"/><circle cx="95.1" cy="7.6" r="2.800" fill="#db4437"/><circle cx="58.7" cy="19.1" r="2.800" fill="#db4437"/><circle cx="70.6" cy="28.7" r="2.800" fill="#db4437"/><circle cx="22" cy="44.4" r="2.800" fill="#db4437"/><circle cx="33.9" cy="53.4" r="2.800" fill="#db4437"/><circle cx="46.5" cy="51.4" r="2.800" fill="#db4437"/><circle cx="9.8" cy="61.2" r="2.800" fill="#db4437"/></g><rect x="7.700" y="65" width="89.900" height="1.600" fill="#333"/></g>
<g transform="translate(1684.2 804.6)"><rect x="0.600" y="0.600" width="104.500" height="72.200" fill="#fff" stroke="#bdbdbd" stroke-width="1.200"/><defs><clipPath id="sc2"><rect x="7.300" y="7.300" width="90.300" height="58.800"/></clipPath></defs><rect x="28.5" y="7.3" width="1" height="58.8" fill="#e0e0e0"/><rect x="50.2" y="7.3" width="1" height="58.8" fill="#e0e0e0"/><rect x="72.2" y="7.3" width="1" height="58.8" fill="#e0e0e0"/><rect x="94.3" y="7.3" width="1" height="58.8" fill="#e0e0e0"/><rect x="7.3" y="6.8" width="90.3" height="1" fill="#e0e0e0"/><rect x="7.3" y="18.4" width="90.3" height="1" fill="#e0e0e0"/><rect x="7.3" y="30.2" width="90.3" height="1" fill="#e0e0e0"/><rect x="7.3" y="42.2" width="90.3" height="1" fill="#e0e0e0"/><rect x="7.3" y="54.1" width="90.3" height="1" fill="#e0e0e0"/><g clip-path="url(#sc2)"><circle cx="30.100" cy="14.300" r="7.800" fill="#7baaf7"/><circle cx="54.900" cy="11.900" r="5.600" fill="#7baaf7"/><circle cx="72.400" cy="63.300" r="22.400" fill="#7baaf7"/><circle cx="19.200" cy="47.200" r="11.200" fill="#e06055" fill-opacity="0.95"/><circle cx="66.800" cy="40.200" r="5.600" fill="#db4437" fill-opacity="0.8"/><circle cx="66.800" cy="59.100" r="4.200" fill="#db4437" fill-opacity="0.8"/></g><path d="M7.300 7.300V66.100H97.600" fill="none" stroke="#aaa" stroke-width="1.300"/></g>
<g transform="translate(1545.2 936.6)"><rect x="0.600" y="0.600" width="104.500" height="72.200" fill="#fff" stroke="#bdbdbd" stroke-width="1.200"/><rect x="3.900" y="4.200" width="97.500" height="65.600" fill="#e6f4fd"/><path d="M35.2 13.0L38.1 6.3L42.6 4.5L47.1 5.6L49.3 8.9L47.8 14.5L46.3 19.7L44.1 24.9L40.7 29.4L39.2 25.7L38.1 19.7L35.2 16.8z" fill="#f5fbea" stroke="#e1ead0" stroke-width="0.700" stroke-linejoin="round"/><path d="M46.3 25.8L49.3 25.5L49.5 27.2L46.7 27.6z" fill="#f5fbea" stroke="#e1ead0" stroke-width="0.700" stroke-linejoin="round"/><path d="M55.3 11.9L59.0 10.8L60.1 13.4L56.8 14.9z" fill="#f5fbea" stroke="#e1ead0" stroke-width="0.700" stroke-linejoin="round"/><path d="M54.5 30.2L56.8 24.9L59.7 22.7L61.2 23.5L60.1 30.2L57.5 32.4z" fill="#f5fbea" stroke="#e1ead0" stroke-width="0.700" stroke-linejoin="round"/><path d="M50.0 32.4L54.5 30.2L60.1 30.9L62.0 37.6L57.5 39.5L53.0 39.1L50.0 36.1z" fill="#f5fbea" stroke="#e1ead0" stroke-width="0.700" stroke-linejoin="round"/><path d="M48.6 43.6L53.0 40.6L59.7 40.6L64.9 42.1L67.2 45.8L69.4 48.8L66.4 52.5L64.9 57.0L62.0 61.4L59.0 62.2L56.8 58.5L56.8 52.5L52.3 50.3L48.6 48.0z" fill="#f5fbea" stroke="#e1ead0" stroke-width="0.700" stroke-linejoin="round"/><path d="M63.5 39.1L64.9 35.4L69.4 33.9L85.8 35.4L86.5 39.1L89.5 39.1L87.3 42.1L83.6 45.1L79.8 49.5L76.9 47.3L73.9 48.0L73.1 50.3L71.6 48.8L69.4 45.1L67.2 42.1z" fill="#f5fbea" stroke="#e1ead0" stroke-width="0.700" stroke-linejoin="round"/><path d="M77.6 45.8L82.8 45.1L85.1 49.5L82.1 52.5L79.8 51.0z" fill="#f5fbea" stroke="#e1ead0" stroke-width="0.700" stroke-linejoin="round"/><path d="M79.8 52.9L91.0 54.0L91.8 56.2L81.3 54.9z" fill="#f5fbea" stroke="#e1ead0" stroke-width="0.700" stroke-linejoin="round"/><path d="M82.1 59.2L85.8 56.2L91.0 57.0L93.2 60.7L91.0 64.8L85.8 62.9L82.8 62.2z" fill="#f5fbea" stroke="#e1ead0" stroke-width="0.700" stroke-linejoin="round"/><path d="M95.5 65.9L98.5 62.2L99.4 63.1L96.6 67.0z" fill="#f5fbea" stroke="#e1ead0" stroke-width="0.700" stroke-linejoin="round"/><path d="M22.5 41.7L27.7 42.8L29.9 45.8L32.9 48.0L33.7 49.9L31.4 48.9L27.7 46.5L24.7 44.3z" fill="#f5fbea" stroke="#e1ead0" stroke-width="0.700" stroke-linejoin="round"/><path d="M31.8 50.6L33.7 51.8L33.3 54.0L34.4 56.2L37.4 58.5L38.5 62.2L36.6 64.4L35.9 68.1L34.4 69.8L32.9 67.4L33.3 60.7L32.2 56.2L31.4 53.3z" fill="#f5fbea" stroke="#e1ead0" stroke-width="0.700" stroke-linejoin="round"/><path d="M64.2 51.8L65.3 54.0L64.4 57.0L63.5 54.7z" fill="#f5fbea" stroke="#e1ead0" stroke-width="0.700" stroke-linejoin="round"/><path d="M16.5 23.8L20.3 21.2L22.5 15.3L27.7 9.3L31.4 5.2L35.9 4.8L37.0 7.1L34.4 13.0L32.2 18.2L35.2 22.7L36.6 27.2L35.9 30.9L38.5 34.6L38.1 36.1L34.4 38.0L32.9 36.1L30.7 35.0L20.3 34.6L16.9 28.7z" fill="#63b81a" stroke-linejoin="round"/><path d="M28.5 29.0L31.8 28.3L32.9 30.9L30.7 32.2L28.6 30.9z" fill="#f5fbea" stroke-linejoin="round"/><path d="M31.1 25.3L32.8 24.6L32.5 27.2L31.3 27.6z" fill="#cfeeb0" stroke-linejoin="round"/><path d="M9.8 22.7L15.4 22.3L16.5 23.8L16.7 28.7L13.9 30.9L10.6 33.1L6.9 34.3L9.8 31.7L10.9 28.7L9.1 26.4z" fill="#b9f28f" stroke-linejoin="round"/><path d="M20.3 34.6L30.7 35.0L32.9 36.1L34.4 38.0L33.3 40.6L31.8 43.0L30.7 42.1L27.7 43.0L22.5 41.8L20.3 39.1z" fill="#b9f28f" stroke-linejoin="round"/><path d="M33.7 51.8L36.6 50.3L40.4 51.0L43.7 53.6L43.3 57.0L41.1 60.0L38.5 62.2L37.4 58.5L34.4 56.2L33.3 54.0z" fill="#8ade4d" stroke-linejoin="round"/><path d="M60.1 23.1L65.7 22.0L69.4 19.7L74.6 16.8L76.9 15.3L75.7 9.3L78.0 8.9L79.5 13.8L82.1 16.8L85.1 19.7L89.5 20.5L94.0 21.2L99.2 22.0L101.8 25.3L100.7 27.2L97.0 28.7L94.7 30.2L94.0 33.9L91.8 35.4L90.3 32.4L89.5 37.6L86.9 38.4L85.8 35.4L79.8 34.3L72.4 33.9L68.7 33.9L64.9 35.4L64.6 38.4L62.0 37.6L61.2 33.1L59.7 30.2z" fill="#2a7c08" stroke-linejoin="round"/><path d="M65.7 22.0L66.8 17.5L69.4 15.6L70.5 16.8L68.3 19.7L67.2 22.7z" fill="#2a7c08" stroke-linejoin="round"/><path d="M64.2 10.4L67.9 8.6L69.8 9.3L67.2 11.5z" fill="#2a7c08" stroke-linejoin="round"/><path d="M87.3 16.8L91.0 16.4L90.6 19.0L88.0 18.6z" fill="#2a7c08" stroke-linejoin="round"/><path d="M5.4 23.5L6.5 21.2L7.2 24.2L8.3 26.1L7.2 27.2L5.4 26.1z" fill="#2a7c08" stroke-linejoin="round"/><path d="M51.9 34.6L54.5 33.9L55.6 38.0L52.3 38.4z" fill="#2a7c08" stroke-linejoin="round"/></g>
<g transform="translate(1684.2 936.6)"><rect x="0.600" y="0.600" width="104.500" height="72.200" fill="#fff" stroke="#bdbdbd" stroke-width="1.200"/><rect x="3.900" y="4.200" width="97.500" height="65.600" fill="#e6f4fd"/><path d="M35.2 13.0L38.1 6.3L42.6 4.5L47.1 5.6L49.3 8.9L47.8 14.5L46.3 19.7L44.1 24.9L40.7 29.4L39.2 25.7L38.1 19.7L35.2 16.8z" fill="#f5fbea" stroke="#e1ead0" stroke-width="0.700" stroke-linejoin="round"/><path d="M46.3 25.8L49.3 25.5L49.5 27.2L46.7 27.6z" fill="#f5fbea" stroke="#e1ead0" stroke-width="0.700" stroke-linejoin="round"/><path d="M55.3 11.9L59.0 10.8L60.1 13.4L56.8 14.9z" fill="#f5fbea" stroke="#e1ead0" stroke-width="0.700" stroke-linejoin="round"/><path d="M54.5 30.2L56.8 24.9L59.7 22.7L61.2 23.5L60.1 30.2L57.5 32.4z" fill="#f5fbea" stroke="#e1ead0" stroke-width="0.700" stroke-linejoin="round"/><path d="M50.0 32.4L54.5 30.2L60.1 30.9L62.0 37.6L57.5 39.5L53.0 39.1L50.0 36.1z" fill="#f5fbea" stroke="#e1ead0" stroke-width="0.700" stroke-linejoin="round"/><path d="M48.6 43.6L53.0 40.6L59.7 40.6L64.9 42.1L67.2 45.8L69.4 48.8L66.4 52.5L64.9 57.0L62.0 61.4L59.0 62.2L56.8 58.5L56.8 52.5L52.3 50.3L48.6 48.0z" fill="#f5fbea" stroke="#e1ead0" stroke-width="0.700" stroke-linejoin="round"/><path d="M63.5 39.1L64.9 35.4L69.4 33.9L85.8 35.4L86.5 39.1L89.5 39.1L87.3 42.1L83.6 45.1L79.8 49.5L76.9 47.3L73.9 48.0L73.1 50.3L71.6 48.8L69.4 45.1L67.2 42.1z" fill="#f5fbea" stroke="#e1ead0" stroke-width="0.700" stroke-linejoin="round"/><path d="M77.6 45.8L82.8 45.1L85.1 49.5L82.1 52.5L79.8 51.0z" fill="#f5fbea" stroke="#e1ead0" stroke-width="0.700" stroke-linejoin="round"/><path d="M79.8 52.9L91.0 54.0L91.8 56.2L81.3 54.9z" fill="#f5fbea" stroke="#e1ead0" stroke-width="0.700" stroke-linejoin="round"/><path d="M82.1 59.2L85.8 56.2L91.0 57.0L93.2 60.7L91.0 64.8L85.8 62.9L82.8 62.2z" fill="#f5fbea" stroke="#e1ead0" stroke-width="0.700" stroke-linejoin="round"/><path d="M95.5 65.9L98.5 62.2L99.4 63.1L96.6 67.0z" fill="#f5fbea" stroke="#e1ead0" stroke-width="0.700" stroke-linejoin="round"/><path d="M22.5 41.7L27.7 42.8L29.9 45.8L32.9 48.0L33.7 49.9L31.4 48.9L27.7 46.5L24.7 44.3z" fill="#f5fbea" stroke="#e1ead0" stroke-width="0.700" stroke-linejoin="round"/><path d="M31.8 50.6L33.7 51.8L33.3 54.0L34.4 56.2L37.4 58.5L38.5 62.2L36.6 64.4L35.9 68.1L34.4 69.8L32.9 67.4L33.3 60.7L32.2 56.2L31.4 53.3z" fill="#f5fbea" stroke="#e1ead0" stroke-width="0.700" stroke-linejoin="round"/><path d="M64.2 51.8L65.3 54.0L64.4 57.0L63.5 54.7z" fill="#f5fbea" stroke="#e1ead0" stroke-width="0.700" stroke-linejoin="round"/><path d="M16.5 23.8L20.3 21.2L22.5 15.3L27.7 9.3L31.4 5.2L35.9 4.8L37.0 7.1L34.4 13.0L32.2 18.2L35.2 22.7L36.6 27.2L35.9 30.9L38.5 34.6L38.1 36.1L34.4 38.0L32.9 36.1L30.7 35.0L20.3 34.6L16.9 28.7z" fill="#f5fbea" stroke="#e1ead0" stroke-width="0.700" stroke-linejoin="round"/><path d="M9.8 22.7L15.4 22.3L16.5 23.8L16.7 28.7L13.9 30.9L10.6 33.1L6.9 34.3L9.8 31.7L10.9 28.7L9.1 26.4z" fill="#f5fbea" stroke="#e1ead0" stroke-width="0.700" stroke-linejoin="round"/><path d="M20.3 34.6L30.7 35.0L32.9 36.1L34.4 38.0L33.3 40.6L31.8 43.0L30.7 42.1L27.7 43.0L22.5 41.8L20.3 39.1z" fill="#f5fbea" stroke="#e1ead0" stroke-width="0.700" stroke-linejoin="round"/><path d="M33.7 51.8L36.6 50.3L40.4 51.0L43.7 53.6L43.3 57.0L41.1 60.0L38.5 62.2L37.4 58.5L34.4 56.2L33.3 54.0z" fill="#f5fbea" stroke="#e1ead0" stroke-width="0.700" stroke-linejoin="round"/><path d="M60.1 23.1L65.7 22.0L69.4 19.7L74.6 16.8L76.9 15.3L75.7 9.3L78.0 8.9L79.5 13.8L82.1 16.8L85.1 19.7L89.5 20.5L94.0 21.2L99.2 22.0L101.8 25.3L100.7 27.2L97.0 28.7L94.7 30.2L94.0 33.9L91.8 35.4L90.3 32.4L89.5 37.6L86.9 38.4L85.8 35.4L79.8 34.3L72.4 33.9L68.7 33.9L64.9 35.4L64.6 38.4L62.0 37.6L61.2 33.1L59.7 30.2z" fill="#f5fbea" stroke="#e1ead0" stroke-width="0.700" stroke-linejoin="round"/><ellipse cx="25.100" cy="33.300" rx="9.800" ry="11.900" fill="#5fb71a"/><circle cx="27.600" cy="39.900" r="5.900" fill="#b5f28b"/><ellipse cx="39.200" cy="56" rx="7.700" ry="8.700" fill="#8ee04f"/><ellipse cx="53.100" cy="36.800" rx="11.500" ry="12.900" fill="#3f9a10"/><circle cx="55.200" cy="34.500" r="3.900" fill="#d9f9c4"/><ellipse cx="79.700" cy="29.100" rx="13.600" ry="15.100" fill="#2a7a1c"/></g>
</svg>
<svg class="abs" style="left:0;top:0" width="1999" height="400" viewBox="0 0 1999 400" fill="none">
<rect x="1543.600" y="123.300" width="25.300" height="23.600" rx="2.400" stroke="#188038" stroke-width="2.700"/>
<path d="M1550.100 131v11M1556.250 127.800v14.200M1562.400 136.500v5.500" stroke="#188038" stroke-width="2.900"/>
<path d="M1933.300 129.800l14 14M1947.300 129.800l-14 14" stroke="#444746" stroke-width="2.200"/>
<path d="M1552.100 338.700h26M1559.400 338.700v-8.900M1565.500 338.700v-20.800M1571.200 338.700v-14.900" stroke="#777" stroke-width="2.300"/>
<path d="M1901.200 327h11.800l-5.900 5.900z" fill="#444746"/>
</svg>
<div class="abs" style="left:0;top:1045px;width:1999px;height:1px;background:rgba(0,0,0,0.55)"></div><div class="abs" style="left:0;top:1046px;width:1999px;height:1px;background:#000"></div>
<svg class="abs" style="left:0;top:0" width="1999" height="500" viewBox="0 0 1999 500">
<defs><filter id="rough" x="-5%" y="-5%" width="110%" height="110%"><feTurbulence type="fractalNoise" baseFrequency="0.35" numOctaves="2" seed="3" result="n"/><feDisplacementMap in="SourceGraphic" in2="n" scale="2.600" xChannelSelector="R" yChannelSelector="G"/></filter></defs>
<g filter="url(#rough)" fill="#ff2600" stroke="#ff2600" stroke-linejoin="round">
<path d="M1399 329.500L1520 329.500" stroke-width="4.400" fill="none" stroke-linecap="round"/>
<path d="M1518 314.500L1541.500 329.500L1518 344.500z" stroke-width="1"/>
<path d="M1399 329.500L1527 418.500" stroke-width="4.400" fill="none" stroke-linecap="round"/>
<path d="M1534.200 405.800L1517 429.600L1544.500 430.400z" stroke-width="1"/>
</g>
</svg>
</div></body></html>
